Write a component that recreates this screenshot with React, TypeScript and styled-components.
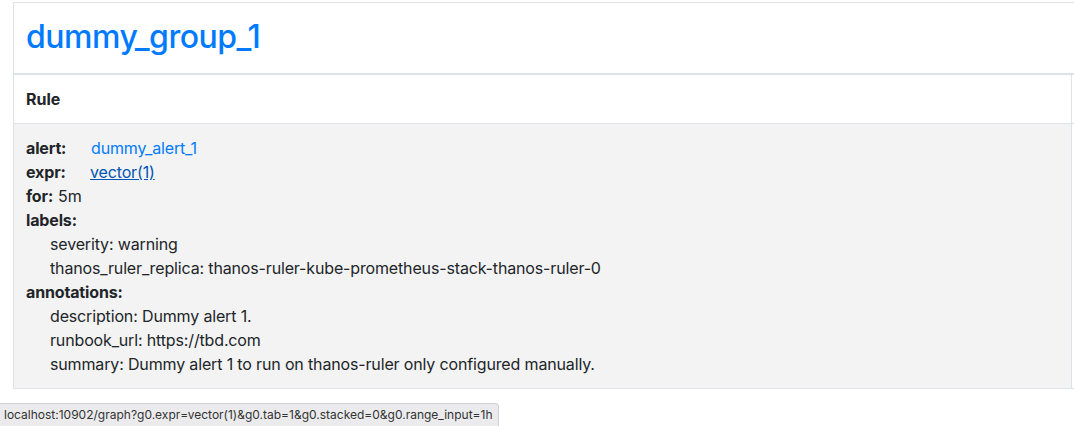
import React from "react";
import styled, { createGlobalStyle } from "styled-components";

const GlobalStyle = createGlobalStyle`
  html, body {
    margin: 0;
    padding: 0;
    background: #fff;
    overflow: hidden;
  }
  body {
    font-family: Inter, "Liberation Sans", Arial, sans-serif;
    font-size: 16px;
    line-height: 1.5;
    color: #212529;
  }
`;

const Page = styled.div`
  padding: 2px 0 0 13px;
  width: 1100px;
`;

const Table = styled.table`
  width: 100%;
  border-collapse: collapse;
  border: 1px solid #dee2e6;
`;

const GroupCell = styled.th`
  padding: 12px 12px 14px;
  text-align: left;
  border-bottom: 2px solid #dee2e6;
`;

const GroupTitle = styled.h2`
  margin: 0;
  font-size: 32px;
  font-weight: 500;
  line-height: 44px;
  letter-spacing: -0.5px;
  color: #007bff;
`;

const HeadCell = styled.td`
  padding: 12px;
  height: 24px;
  font-weight: 700;
  border-right: 1px solid #dee2e6;
  border-bottom: 1px solid #dee2e6;
  width: 1033px;
`;

const EmptyCell = styled.td`
  border-bottom: 1px solid #dee2e6;
`;

const BodyCell = styled.td<{ $shade?: boolean }>`
  padding: 12px;
  background: ${(p) => (p.$shade ? "#f3f3f3" : "transparent")};
  border-right: 1px solid #dee2e6;
`;

const Line = styled.div<{ $indent?: boolean }>`
  display: flex;
  height: 24px;
  line-height: 24px;
  padding-left: ${(p) => (p.$indent ? "24px" : "0")};
  white-space: pre;
  letter-spacing: -0.15px;
`;

const Key = styled.b<{ $wide?: boolean }>`
  font-weight: 700;
  width: ${(p) => (p.$wide ? "64px" : "auto")};
  margin-right: ${(p) => (p.$wide ? "0" : "5px")};
`;

const Link = styled.a<{ $underline?: boolean }>`
  color: ${(p) => (p.$underline ? "#0056b3" : "#007bff")};
  text-decoration: ${(p) => (p.$underline ? "underline" : "none")};
`;

const StatusBar = styled.div`
  position: fixed;
  left: 0;
  bottom: 0;
  height: 22px;
  padding: 0 5px 0 4px;
  background: #ebebed;
  border-top: 1px solid #d2d2d4;
  border-right: 1px solid #d2d2d4;
  border-top-right-radius: 4px;
  font-size: 12px;
  line-height: 22px;
  color: #333;
`;

const labels = [
  ["severity", "warning"],
  ["thanos_ruler_replica", "thanos-ruler-kube-prometheus-stack-thanos-ruler-0"],
];

const annotations = [
  ["description", "Dummy alert 1."],
  ["runbook_url", "https://tbd.com"],
  ["summary", "Dummy alert 1 to run on thanos-ruler only configured manually."],
];

export default function App() {
  return (
    <>
      <GlobalStyle />
      <Page>
        <Table>
          <thead>
            <tr>
              <GroupCell colSpan={2}>
                <GroupTitle>dummy_group_1</GroupTitle>
              </GroupCell>
            </tr>
          </thead>
          <tbody>
            <tr>
              <HeadCell>Rule</HeadCell>
              <EmptyCell />
            </tr>
            <tr>
              <BodyCell $shade>
                <Line>
                  <Key $wide>alert:</Key>
                  <Link href="#" style={{ marginLeft: 1 }}>
                    dummy_alert_1
                  </Link>
                </Line>
                <Line>
                  <Key $wide>expr:</Key>
                  <Link href="#" $underline>
                    vector(1)
                  </Link>
                </Line>
                <Line>
                  <Key>for:</Key>
                  <span>5m</span>
                </Line>
                <Line>
                  <Key>labels:</Key>
                </Line>
                {labels.map(([k, v]) => (
                  <Line $indent key={k}>
                    {k}: {v}
                  </Line>
                ))}
                <Line>
                  <Key>annotations:</Key>
                </Line>
                {annotations.map(([k, v]) => (
                  <Line $indent key={k}>
                    {k}: {v}
                  </Line>
                ))}
              </BodyCell>
              <BodyCell />
            </tr>
          </tbody>
        </Table>
      </Page>
      <StatusBar>
        localhost:10902/graph?g0.expr=vector(1)&amp;g0.tab=1&amp;g0.stacked=0&amp;g0.range_input=1h
      </StatusBar>
    </>
  );
}
